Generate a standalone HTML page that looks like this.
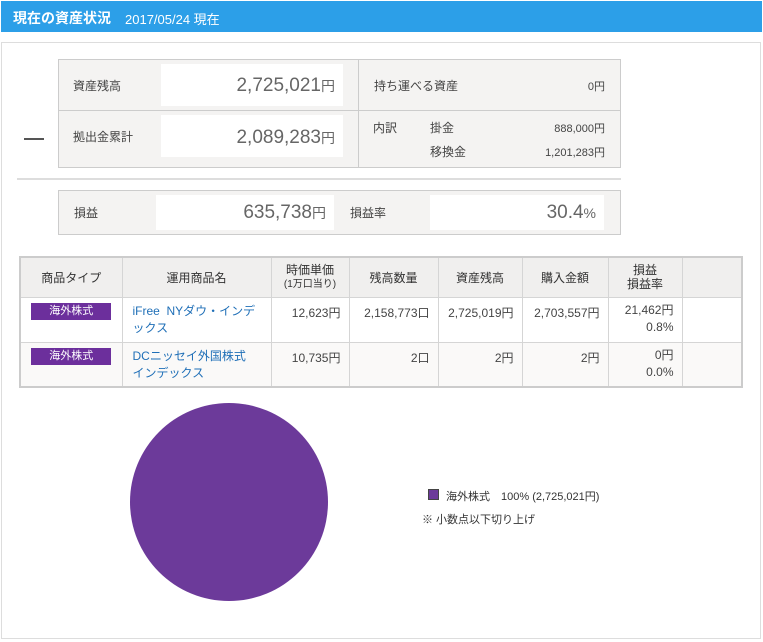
<!DOCTYPE html>
<html><head><meta charset="utf-8"><style>
*{margin:0;padding:0;box-sizing:border-box}
body{width:763px;height:642px;background:#fff;font-family:"Liberation Sans","Noto Sans CJK JP",sans-serif;color:#444;font-size:12px;position:relative;overflow:hidden}
.a{position:absolute}
.hd{left:1px;top:1px;width:761px;height:31px;background:#2c9fe8;color:#fff}
.panel{left:1px;top:42px;width:760px;height:597px;border:1px solid #ddd}
.box{background:#f4f3f2;border:1px solid #ccc}
.w{background:#fff}
table{border-collapse:collapse;position:absolute;left:19px;top:256px;width:724px;border:2px solid #ccc}
td,th{border:1px solid #d5d5d5;font-weight:normal;font-size:12px}
th{background:#f0efee;height:40px;color:#333}
.tag{display:block;width:80px;height:17px;background:#6c2f9c;color:#fff;font-size:11px;text-align:center;line-height:17px;margin:0 auto}
.r{text-align:right;vertical-align:top;padding:6px 8px 0 0}
a{color:#1f6fb7;text-decoration:none}
.big{font-size:19px;color:#666}
</style></head><body>
<div class="a hd"><span class="a" style="left:12px;top:7px;font-size:14px;font-weight:bold">現在の資産状況</span><span class="a" style="left:124px;top:8px;font-size:13px">2017/05/24 現在</span></div>
<div class="a panel"></div>
<div class="a" style="left:24px;top:138px;width:20px;height:2px;background:#555"></div>
<div class="a box" style="left:58px;top:59px;width:563px;height:109px"></div>
<div class="a" style="left:58px;top:110px;width:563px;height:1px;background:#ccc"></div>
<div class="a" style="left:358px;top:59px;width:1px;height:109px;background:#ccc"></div>
<div class="a" style="left:73px;top:77px">資産残高</div>
<div class="a w" style="left:161px;top:64px;width:182px;height:42px"><span class="a big" style="right:8px;top:11px">2,725,021<span style="font-size:14px">円</span></span></div>
<div class="a" style="left:73px;top:128px">拠出金累計</div>
<div class="a w" style="left:161px;top:115px;width:182px;height:42px"><span class="a big" style="right:8px;top:12px">2,089,283<span style="font-size:14px">円</span></span></div>
<div class="a" style="left:374px;top:77px">持ち運べる資産</div>
<div class="a" style="right:158px;top:78px;font-size:11px">0円</div>
<div class="a" style="left:373px;top:119px">内訳</div>
<div class="a" style="left:430px;top:119px">掛金</div>
<div class="a" style="right:158px;top:120px;font-size:11px">888,000円</div>
<div class="a" style="left:430px;top:143px">移換金</div>
<div class="a" style="right:158px;top:144px;font-size:11px">1,201,283円</div>
<div class="a" style="left:17px;top:178px;width:604px;height:2px;background:#ddd"></div>
<div class="a box" style="left:58px;top:190px;width:563px;height:45px"></div>
<div class="a" style="left:74px;top:204px">損益</div>
<div class="a w" style="left:156px;top:195px;width:178px;height:35px"><span class="a big" style="right:8px;top:7px">635,738<span style="font-size:14px">円</span></span></div>
<div class="a" style="left:350px;top:204px">損益率</div>
<div class="a w" style="left:430px;top:195px;width:174px;height:35px"><span class="a big" style="right:8px;top:7px">30.4<span style="font-size:14px">%</span></span></div>
<table>
<tr><th style="width:102px">商品タイプ</th><th style="width:149px">運用商品名</th><th style="width:78px;line-height:13px">時価単価<br><span style="font-size:10px">(1万口当り)</span></th><th style="width:89px">残高数量</th><th style="width:84px">資産残高</th><th style="width:86px">購入金額</th><th style="width:74px;line-height:14px">損益<br>損益率</th><th></th></tr>
<tr style="height:45px"><td style="vertical-align:top;padding-top:5px"><span class="tag">海外株式</span></td><td style="vertical-align:top;padding:5px 14px 0 10px;line-height:17px"><a>iFree&nbsp; NYダウ・インデックス</a></td><td class="r">12,623円</td><td class="r">2,158,773口</td><td class="r">2,725,019円</td><td class="r">2,703,557円</td><td class="r" style="line-height:17px;padding-top:4px">21,462円<br>0.8%</td><td></td></tr>
<tr style="height:45px;background:#faf9f8"><td style="vertical-align:top;padding-top:5px"><span class="tag">海外株式</span></td><td style="vertical-align:top;padding:5px 14px 0 10px;line-height:17px"><a>DCニッセイ外国株式インデックス</a></td><td class="r">10,735円</td><td class="r">2口</td><td class="r">2円</td><td class="r">2円</td><td class="r" style="line-height:17px;padding-top:4px">0円<br>0.0%</td><td></td></tr>
</table>
<div class="a" style="left:130px;top:403px;width:198px;height:198px;border-radius:50%;background:#6c3a9a"></div>
<div class="a" style="left:428px;top:489px;width:11px;height:11px;background:#6c3a9a;border:1px solid #444"></div>
<div class="a" style="left:446px;top:488px;font-size:11px;color:#333">海外株式　100% (2,725,021円)</div>
<div class="a" style="left:422px;top:511px;font-size:11px;color:#333">※ 小数点以下切り上げ</div>
</body></html>
